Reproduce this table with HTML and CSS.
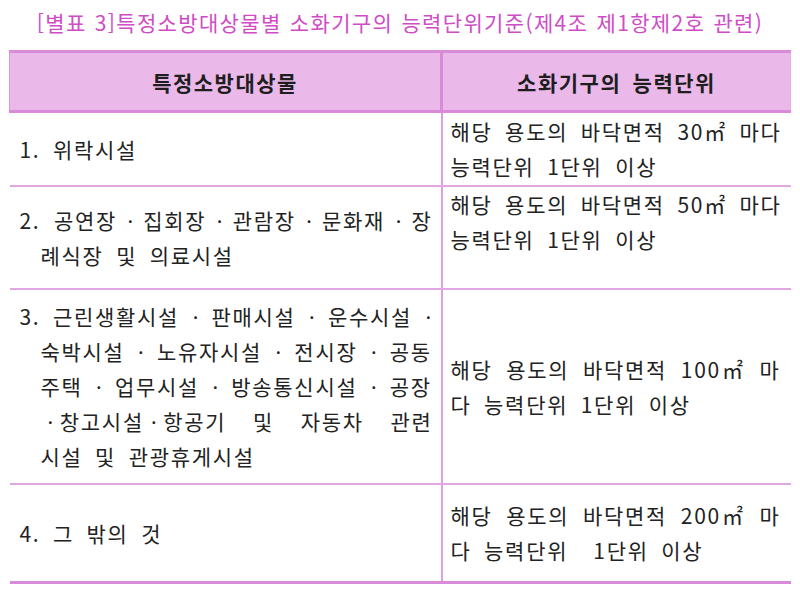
FILE: index.html
```html
<!DOCTYPE html>
<html lang="ko">
<head>
<meta charset="utf-8">
<title>별표 3</title>
<link rel="stylesheet" href="styles.css">
</head>
<body>
<div class="page">
  <h1 class="title">[별표 3]특정소방대상물별 소화기구의 능력단위기준(제4조 제1항제2호 관련)</h1>
  <table class="grid">
    <thead>
      <tr class="hrow">
        <th class="c1">특정소방대상물</th>
        <th class="c2">소화기구의 능력단위</th>
      </tr>
    </thead>
    <tbody>
      <tr class="r1">
        <td class="c1"><div class="ln">1. 위락시설</div></td>
        <td class="c2"><div class="ln j">해당 용도의 바닥면적 30㎡ 마다</div><div class="ln">능력단위 1단위 이상</div></td>
      </tr>
      <tr class="r2">
        <td class="c1"><div class="ln j">2. 공연장<span class="dt sm">ㆍ</span>집회장<span class="dt sm">ㆍ</span>관람장<span class="dt sm">ㆍ</span>문화재<span class="dt sm">ㆍ</span>장</div><div class="ln ind">례식장 및 의료시설</div></td>
        <td class="c2 top"><div class="ln j">해당 용도의 바닥면적 50㎡ 마다</div><div class="ln">능력단위 1단위 이상</div></td>
      </tr>
      <tr class="r3">
        <td class="c1">
          <div class="ln j">3. 근린생활시설<span class="dt md">ㆍ</span>판매시설<span class="dt md">ㆍ</span>운수시설<span class="dt md">ㆍ</span></div>
          <div class="ln ind">숙박시설<span class="dt wide">ㆍ</span>노유자시설<span class="dt wide">ㆍ</span>전시장<span class="dt wide">ㆍ</span>공동</div>
          <div class="ln ind">주택<span class="dt wide">ㆍ</span>업무시설<span class="dt wide">ㆍ</span>방송통신시설<span class="dt wide">ㆍ</span>공장</div>
          <div class="ln ind j"><span class="dt">ㆍ</span>창고시설<span class="dt">ㆍ</span>항공기 및 자동차 관련</div>
          <div class="ln ind">시설 및 관광휴게시설</div>
        </td>
        <td class="c2"><div class="ln j">해당 용도의 바닥면적 100㎡ 마</div><div class="ln">다 능력단위 1단위 이상</div></td>
      </tr>
      <tr class="r4">
        <td class="c1"><div class="ln">4. 그 밖의 것</div></td>
        <td class="c2"><div class="ln j">해당 용도의 바닥면적 200㎡ 마</div><div class="ln">다 능력단위&nbsp; 1단위 이상</div></td>
      </tr>
    </tbody>
  </table>
</div>
</body>
</html>
```

FILE: styles.css
```css
html, body {
  margin: 0;
  padding: 0;
  background: #ffffff;
}

body {
  font-family: "Noto Sans CJK KR", "Noto Sans", sans-serif;
  color: #222222;
}

.page {
  width: 800px;
  height: 592px;
  overflow: hidden;
}

.title {
  margin: 0;
  height: 50px;
  padding-top: 7px;
  box-sizing: border-box;
  text-align: center;
  font-size: 21px;
  line-height: 30px;
  font-weight: 400;
  color: #cf4cc6;
  letter-spacing: 1.35px;
  word-spacing: 1px;
}

.grid {
  margin-left: 9px;
  width: 782px;
  border-collapse: collapse;
  table-layout: fixed;
  font-size: 21px;
  letter-spacing: 1.7px;
  word-spacing: 5px;
}

.grid .c1 {
  width: 430px;
}

.grid th {
  background: #eab8e9;
  font-weight: 700;
  font-size: 21px;
  text-align: center;
  height: 57px;
  padding: 0;
  border-top: 3px solid #d98ad8;
  border-bottom: 3px solid #d98ad8;
  color: #1e1e1e;
  letter-spacing: 1.5px;
  word-spacing: 4px;
}

.grid th.c1 {
  border-left: 1px solid #dc96db;
  border-right: 3px solid #d98ad8;
}

.grid th.c2 {
  border-right: 1px solid #e6b0e5;
}

.grid td {
  padding: 0 10px;
  vertical-align: middle;
  border-bottom: 2px solid #e2a6e2;
}

.grid td.c1 {
  border-right: 2px solid #e0a0df;
  padding-left: 10px;
  padding-right: 8px;
}

.grid td.c2 {
  padding-left: 8px;
  padding-right: 10px;
}

.grid td.top {
  vertical-align: top;
  padding-top: 0;
}

.grid tr.r4 td {
  border-bottom: 3px solid #d98ad8;
}

.r1 td { height: 72px; }
.r2 td { height: 101px; }
.r3 td { height: 193px; }
.r4 td { height: 96px; }

.ln {
  line-height: 35px;
  white-space: nowrap;
}

.ln.j {
  text-align: justify;
  text-align-last: justify;
}

.ln.ind {
  padding-left: 21px;
}

.dt {
  letter-spacing: 0;
}

.dt.sm {
  margin: 0 3.5px;
}

.dt.md {
  margin: 0 6.5px;
}

.dt.wide {
  margin: 0 6.5px;
}
```
